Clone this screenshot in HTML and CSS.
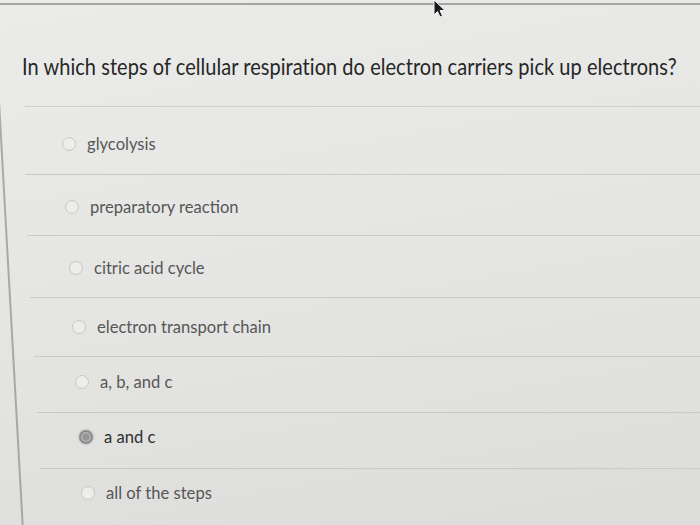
FILE: index.html
```html
<!DOCTYPE html>
<html>
<head>
<meta charset="utf-8">
<link rel="stylesheet" href="styles.css">
</head>
<body>
<div class="page">
  <div class="topline"></div>
  <div class="question"><span class="qtext">In which steps of cellular respiration do electron carriers pick up electrons?</span></div>
  <div class="opt o1"><span class="radio"></span><span class="label">glycolysis</span></div>
  <div class="opt o2"><span class="radio"></span><span class="label">preparatory reaction</span></div>
  <div class="opt o3"><span class="radio"></span><span class="label">citric acid cycle</span></div>
  <div class="opt o4"><span class="radio"></span><span class="label">electron transport chain</span></div>
  <div class="opt o5"><span class="radio"></span><span class="label">a, b, and c</span></div>
  <div class="opt o6 selected"><span class="radio"></span><span class="label">a and c</span></div>
  <div class="opt o7 last"><span class="radio"></span><span class="label">all of the steps</span></div>
  <div class="edge"></div>
  <svg class="cursor" width="16" height="20" viewBox="0 0 16 20"><path d="M2 0 L2 15 L5.5 11.5 L8 17 L10.5 16 L8 10.5 L13 10.5 Z" fill="#1a1a1a" stroke="#f4f4f4" stroke-width="1"/></svg>
</div>
</body>
</html>
```
FILE: styles.css
```css
html, body {
  margin: 0;
  padding: 0;
}
body {
  width: 700px;
  height: 525px;
  overflow: hidden;
  background: linear-gradient(170deg, #ebebe9 0%, #e5e5e3 50%, #dcdcda 100%);
  font-family: Lato, "Open Sans", sans-serif;
}
.page {
  position: relative;
  height: 525px;
}
.topline {
  height: 3px;
  border-bottom: 2px solid #a4a4a2;
}
.question {
  height: 102px;
  box-sizing: border-box;
  padding-top: 49px;
  margin-left: 25px;
  border-bottom: 1.5px solid #cfcfcd;
}
.qtext {
  display: inline-block;
  margin-left: -3px;
  font-size: 20px;
  color: #262626;
  letter-spacing: 0.04px;
  transform: scaleY(1.12);
  transform-origin: left center;
}
.opt {
  display: flex;
  align-items: center;
  box-sizing: border-box;
  border-bottom: 1.5px solid #c9c9c7;
  font-size: 16.6px;
  color: #575757;
}
.opt.last { border-bottom: none; }
.radio {
  width: 12px;
  height: 12px;
  border-radius: 50%;
  border: 1.5px solid #c6c6c4;
  background: #ededeb;
  flex: none;
}
.label {
  margin-left: 11px;
}
.selected .label { color: #2e2e2e; }
.selected .radio {
  width: 10px;
  height: 10px;
  border: 2px solid #8a8a8a;
  background: radial-gradient(circle, #979797 0 45%, #b3b3b3 60%, #d6d6d6 100%);
  box-shadow: 0 0 0 1.5px #d0d0ce;
}
.o1 { height: 68px; margin-left: 25px; padding: 6px 0 0 37px; }
.o2 { height: 61px; margin-left: 27px; padding: 3px 0 0 38px; }
.o3 { height: 62px; margin-left: 30px; padding: 2px 0 0 39px; }
.o4 { height: 59px; margin-left: 34px; padding: 0 0 1px 38px; }
.o5 { height: 56px; margin-left: 37px; padding: 0 0 6px 38px; }
.o6 { height: 56px; margin-left: 40px; padding: 0 0 8px 39px; }
.o7 { height: 56px; margin-left: 42px; padding: 0 0 8px 39px; }
.edge {
  position: absolute;
  left: 7px;
  top: -10px;
  width: 1.5px;
  height: 545px;
  background: #8e8e8c;
  transform: rotate(-3.2deg);
  opacity: 0.7;
}
.cursor {
  position: absolute;
  left: 432px;
  top: 0;
}
```
